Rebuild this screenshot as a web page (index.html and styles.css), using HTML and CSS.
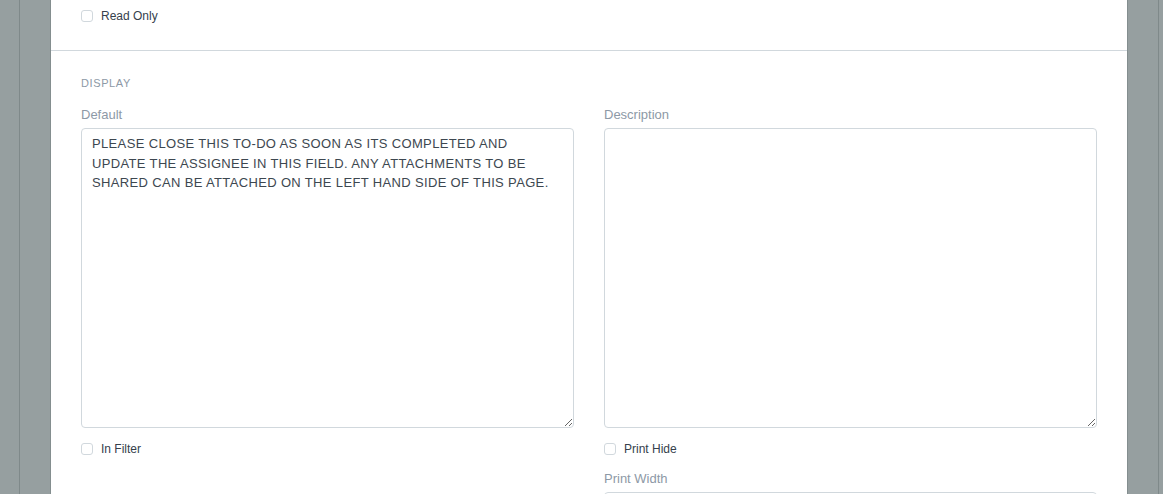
FILE: index.html
```html
<!DOCTYPE html>
<html>
<head>
<meta charset="utf-8">
<link rel="stylesheet" href="styles.css">
</head>
<body>
<div class="outer">
  <div class="panel">
    <section class="section section-top">
      <label class="check"><span class="box"></span><span>Read Only</span></label>
    </section>
    <section class="section section-display">
      <div class="section-head">Display</div>
      <div class="cols">
        <div class="col">
          <div class="label">Default</div>
          <textarea class="area">PLEASE CLOSE THIS TO-DO AS SOON AS ITS COMPLETED AND UPDATE THE ASSIGNEE IN THIS FIELD. ANY ATTACHMENTS TO BE SHARED CAN BE ATTACHED ON THE LEFT HAND SIDE OF THIS PAGE.</textarea>
          <label class="check check-below"><span class="box"></span><span>In Filter</span></label>
        </div>
        <div class="col">
          <div class="label">Description</div>
          <textarea class="area"></textarea>
          <label class="check check-below"><span class="box"></span><span>Print Hide</span></label>
          <div class="label label-next">Print Width</div>
          <div class="input"></div>
        </div>
      </div>
    </section>
  </div>
</div>
</body>
</html>
```

FILE: styles.css
```css
html, body {
  margin: 0;
  padding: 0;
  height: 100%;
  overflow: hidden;
}
body {
  background: #969fa0;
  font-family: "Liberation Sans", Arial, sans-serif;
  font-size: 13px;
  color: #36414c;
}
.outer {
  margin: 0 4px 0 19px;
  border-left: 1px solid #7f898a;
  border-right: 1px solid #7f898a;
  padding: 0 30px;
  height: 100%;
}
.panel {
  background: #fff;
  border-left: 1px solid #848e8f;
  border-right: 1px solid #848e8f;
  height: 100%;
}
.section {
  padding: 0 30px;
}
.section-top {
  padding-top: 6px;
  padding-bottom: 24px;
  border-bottom: 1px solid #d1d8dd;
}
.check {
  display: flex;
  align-items: center;
  height: 20px;
  font-size: 12px;
  color: #36414c;
}
.box {
  width: 10px;
  height: 10px;
  border: 1px solid #d1d8dd;
  border-radius: 3px;
  margin-right: 8px;
  background: #fff;
  box-sizing: content-box;
}
.section-display {
  padding-top: 24px;
}
.section-head {
  font-size: 11px;
  line-height: 16px;
  text-transform: uppercase;
  letter-spacing: 0.6px;
  color: #8d99a6;
  margin-bottom: 15px;
}
.cols {
  display: grid;
  grid-template-columns: 1fr 1fr;
  column-gap: 30px;
}
.col {
  display: flex;
  flex-direction: column;
}
.label {
  font-size: 13px;
  line-height: 18px;
  color: #8d99a6;
  margin-bottom: 4px;
}
.area {
  display: block;
  box-sizing: border-box;
  width: 100%;
  height: 300px;
  margin: 0;
  border: 1px solid #d1d8dd;
  border-radius: 4px;
  padding: 5px 20px 5px 10px;
  font-family: "Liberation Sans", Arial, sans-serif;
  font-size: 13px;
  line-height: 19.5px;
  letter-spacing: 0.35px;
  color: #3d4750;
  resize: vertical;
  outline: none;
  background: #fff;
}
.check-below {
  margin-top: 11px;
}
.label-next {
  margin-top: 11px;
}
.input {
  height: 30px;
  border: 1px solid #d1d8dd;
  border-radius: 4px;
}
```
